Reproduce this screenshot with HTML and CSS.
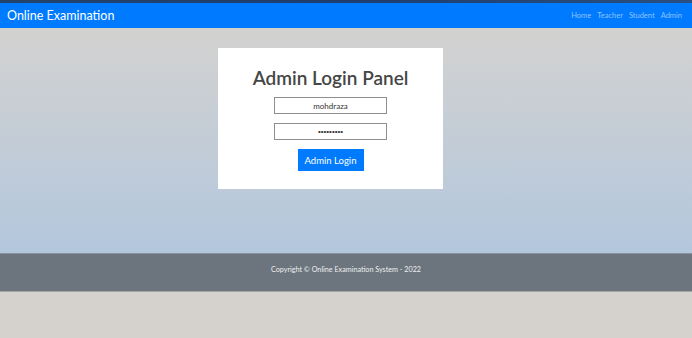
FILE: index.html
```html
<!DOCTYPE html>
<html lang="en">
<head>
  <meta charset="UTF-8" />
  <meta name="viewport" content="width=device-width, initial-scale=1.0"/>
  <title>Admin Login - Online Examination</title>
  <link rel="stylesheet" href="styles.css">
</head>
<body>

  <div class="topline"></div>

  <!-- NAVBAR -->
  <nav class="navbar">
    <a class="brand" href="#">Online Examination</a>
    <ul class="nav-links">
      <li><a href="#">Home</a></li>
      <li><a href="#">Teacher</a></li>
      <li><a href="#">Student</a></li>
      <li><a href="#">Admin</a></li>
    </ul>
  </nav>

  <!-- LOGIN -->
  <main class="main">
    <form class="login-card">
      <h1>Admin Login Panel</h1>
      <input class="login-input" type="text" value="mohdraza">
      <input class="login-input password" type="password" value="mohdraza1">
      <button class="login-button" type="button">Admin Login</button>
    </form>
  </main>

  <!-- FOOTER -->
  <footer class="footer">
    Copyright &copy; Online Examination System - 2022
  </footer>

</body>
</html>
```

FILE: styles.css
```css
html {
  background: #d5d2ce;
}

body {
  margin: 0;
  font-family: 'Lato', 'Open Sans', sans-serif;
  background: #d5d2ce;
}

.topline {
  height: 3px;
  background: linear-gradient(90deg, #24436c, #1d3e6e 50%, #2a4f80);
}

.navbar {
  height: 25px;
  background: #007bff;
  display: flex;
  align-items: center;
  justify-content: space-between;
  padding: 0 10px 0 7px;
}

.brand {
  color: #fff;
  font-size: 12.5px;
  line-height: 16px;
  text-decoration: none;
}

.nav-links {
  list-style: none;
  margin: 0;
  padding: 0;
  display: flex;
  gap: 6px;
  font-size: 7.5px;
  line-height: 10px;
}

.nav-links a {
  color: rgba(255, 255, 255, 0.55);
  text-decoration: none;
}

.main {
  height: 225px;
  box-sizing: border-box;
  padding-top: 20px;
  background: linear-gradient(180deg, #d3d2d0 0%, #b3c7dd 100%);
}

.login-card {
  margin-left: 218px;
  width: 225px;
  height: 141px;
  box-sizing: border-box;
  background: #fff;
  display: flex;
  flex-direction: column;
  align-items: center;
  padding-top: 16px;
}

.login-card h1 {
  margin: 0 0 6px;
  font-size: 19px;
  font-weight: 600;
  color: #464646;
  line-height: 27px;
}

.login-input {
  width: 113px;
  height: 17px;
  box-sizing: border-box;
  border: 1px solid #8f8f8f;
  margin: 0 0 9px;
  padding: 0;
  font-family: inherit;
  font-size: 8px;
  text-align: center;
  color: #333;
}

.password {
  font-family: 'Liberation Sans', sans-serif;
}

.login-button {
  width: 66px;
  height: 22px;
  border: none;
  background: #007bff;
  color: #fff;
  font-family: inherit;
  font-size: 9.5px;
  padding: 0;
}

.footer {
  height: 39px;
  box-sizing: border-box;
  background: #6c757d;
  border-top: 1px solid #8993a0;
  border-bottom: 1px solid #a3a6a9;
  color: #eef0f2;
  font-size: 7.2px;
  display: flex;
  align-items: center;
  justify-content: center;
  padding-bottom: 6px;
}
```
